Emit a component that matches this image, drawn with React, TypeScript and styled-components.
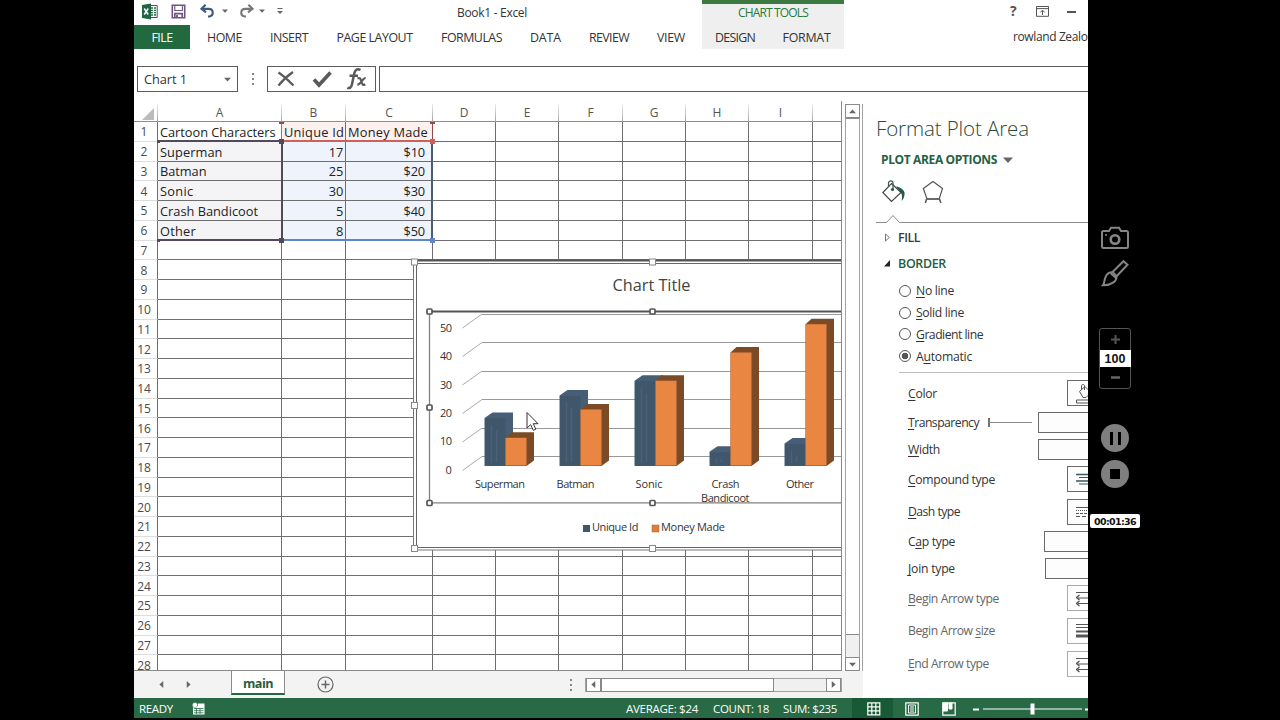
import React, { useLayoutEffect, useRef, useState } from "react";
import styled, { createGlobalStyle } from "styled-components";

const Global = createGlobalStyle`
  * { box-sizing: border-box; }
  html, body { margin: 0; background: #000; overflow: hidden; }
  body { font-family: "Open Sans", "Noto Sans", sans-serif; font-size: 12px; color: #333; }
  svg { display: block; flex: none; }
  u { text-underline-offset: 2px; text-decoration-thickness: 1px; }
`;

/* Text tracked so that it fills a known advance width. */
const FitSpan = styled.span`
  display: inline-block;
  white-space: pre;
`;

function Fit({ w, children }: { w: number; children: React.ReactNode }) {
  const ref = useRef<HTMLSpanElement>(null);
  const [spacing, setSpacing] = useState(0);
  useLayoutEffect(() => {
    const el = ref.current;
    if (!el) return;
    const n = (el.textContent || "").length;
    setSpacing((w - el.getBoundingClientRect().width) / n);
  }, [w]);
  return (
    <FitSpan ref={ref} style={{ letterSpacing: spacing }}>
      {children}
    </FitSpan>
  );
}

const Screen = styled.div`
  display: flex;
  width: 1280px;
  height: 720px;
  padding-left: 134px;
  background: #000;
  overflow: hidden;
`;
const Window = styled.div`
  display: flex;
  flex-direction: column;
  flex: none;
  width: 954px;
  height: 718px;
  background: #fff;
  overflow: hidden;
`;

/* ---------- ribbon ---------- */
const Ribbon = styled.header`
  display: flex;
  height: 49px;
  flex: none;
`;
const RibbonMain = styled.div`
  width: 568px;
`;
const TitleRow = styled.div`
  display: flex;
  align-items: center;
  height: 25px;
  padding: 0 0 3px 7px;
`;
const Gap = styled.i<{ $w: number }>`
  flex: none;
  width: ${(p) => p.$w}px;
`;
const DocTitle = styled.div`
  padding-top: 3px;
  color: #333;
`;
const TabRow = styled.div`
  display: flex;
  height: 24px;
  font-size: 12.4px;
`;
const Tab = styled.div<{ $w: number; $file?: boolean }>`
  display: flex;
  align-items: center;
  justify-content: center;
  flex: none;
  width: ${(p) => p.$w}px;
  color: ${(p) => (p.$file ? "#fff" : "#333")};
  background: ${(p) => (p.$file ? "#23693f" : "transparent")};
`;
const Context = styled.div`
  width: 142px;
  border-top: 4px solid #3c7a42;
  background: #efefef;
`;
const ContextTitle = styled.div`
  display: flex;
  align-items: center;
  justify-content: center;
  height: 21px;
  padding-bottom: 4px;
  color: #287a35;
`;
const Account = styled.div`
  width: 244px;
`;
const WindowButtons = styled.div`
  display: flex;
  align-items: center;
  height: 25px;
  padding: 0 0 3px 166px;
`;
const Help = styled.b`
  width: 10px;
  font-size: 14px;
  line-height: 14px;
  color: #555;
`;
const User = styled.div`
  display: flex;
  align-items: center;
  height: 23px;
  padding-left: 169px;
  white-space: nowrap;
`;

/* ---------- formula bar ---------- */
const FormulaBar = styled.div`
  display: flex;
  flex: none;
  height: 52px;
  padding: 17px 0 9px 3px;
`;
const NameBox = styled.div`
  display: flex;
  align-items: center;
  justify-content: space-between;
  width: 101px;
  height: 26px;
  padding: 0 6px 0 6px;
  border: 1px solid #5c5c5c;
  font-size: 12.8px;
`;
const Dots = styled.div`
  display: flex;
  flex-direction: column;
  justify-content: center;
  align-items: center;
  gap: 3px;
  width: 29px;
`;
const Dot = styled.i`
  width: 2px;
  height: 2px;
  background: #888;
`;
const FxBox = styled.div`
  display: flex;
  align-items: center;
  width: 109px;
  height: 26px;
  padding-left: 9px;
  border: 1px solid #5c5c5c;
`;
const FormulaInput = styled.div`
  flex: 1;
  height: 26px;
  margin: 0 -2px 0 3px;
  border: 1px solid #5c5c5c;
`;

/* ---------- sheet ---------- */
const Body = styled.div`
  display: flex;
  flex: none;
  height: 597px;
`;
const SheetColumn = styled.div`
  display: flex;
  flex-direction: column;
  width: 729px;
  flex: none;
`;
const SheetRow = styled.div`
  display: flex;
  height: 570px;
`;
const COLS = "124px 64px 87px 63px 63px 64px 63px 63px 64px 29px";
const Sheet = styled.div`
  position: relative;
  width: 708px;
  height: 570px;
  overflow: hidden;
  border-bottom: 1px solid #8a8a8a;
  border-right: 1px solid #8a8a8a;
`;
const HeaderLine = styled.div`
  display: grid;
  grid-template-columns: 24px ${COLS};
  height: 21px;
  border-bottom: 1px solid #8c8c8c;
`;
const HeaderCell = styled.div`
  display: flex;
  align-items: center;
  justify-content: center;
  margin-top: 3px;
  padding-bottom: 2px;
  border-right: 1px solid;
  border-image: linear-gradient(#eee, #999) 1;
  font-size: 12px;
  color: #555;
`;
const Corner = styled(HeaderCell)`
  justify-content: flex-end;
  padding: 1px 3px 0 0;
`;
const Line = styled.div`
  display: grid;
  grid-template-columns: 24px ${COLS};
  height: 19.76px;
`;
const RowNumber = styled.div`
  display: flex;
  align-items: center;
  justify-content: center;
  padding: 1px 3px 0 0;
  border-right: 1px solid #6e6e6e;
  border-bottom: 1px solid #ddd;
  font-size: 12px;
  line-height: 15px;
  color: #4a4a4a;
`;
const Cell = styled.div<{ $tint?: string; $num?: boolean; $pad?: number }>`
  display: flex;
  align-items: center;
  justify-content: ${(p) => (p.$num ? "flex-end" : "flex-start")};
  padding: 1px ${(p) => p.$pad ?? 0}px 0 2px;
  border-right: 1px solid #6e6e6e;
  border-bottom: 1px solid #6e6e6e;
  background: ${(p) => p.$tint ?? "#fff"};
  font-size: 12.8px;
  line-height: 16px;
  color: #222;
`;
const Outline = styled.i<{ $x: number; $y: number; $w: number; $h: number; $c: string }>`
  position: absolute;
  left: ${(p) => p.$x}px;
  top: ${(p) => p.$y}px;
  width: ${(p) => p.$w}px;
  height: ${(p) => p.$h}px;
  background: ${(p) => p.$c};
`;
const ChartObject = styled.div`
  position: absolute;
  left: 276px;
  top: 154px;
`;
const VScroll = styled.div`
  display: flex;
  flex-direction: column;
  width: 15px;
  height: 567px;
  margin: 3px 0 0 3px;
  border-left: 1px solid #a3a3a3;
  border-right: 1px solid #a3a3a3;
`;
const ScrollButton = styled.div`
  display: flex;
  align-items: center;
  justify-content: center;
  flex: none;
  width: 15px;
  height: 14px;
  border: 1px solid #8a8a8a;
  background: #fff;
`;
const VButton = styled(ScrollButton)`
  margin-left: -1px;
`;
const VThumb = styled.div`
  height: 517px;
  border-top: 1px solid #8a8a8a;
  border-bottom: 1px solid #8a8a8a;
`;
const VTrack = styled.div`
  flex: 1;
  background: #f0f0f0;
`;
const TabBar = styled.div`
  display: flex;
  align-items: center;
  height: 27px;
  padding-left: 24px;
  background: #f3f3f3;
`;
const SheetTab = styled.div`
  display: flex;
  align-items: center;
  justify-content: center;
  align-self: flex-start;
  width: 54px;
  height: 25px;
  margin-top: -1px;
  padding-top: 3px;
  border: solid #8a8a8a;
  border-width: 0 1px;
  border-bottom: 2px solid #23693f;
  background: #fff;
  font-weight: 700;
  font-size: 12.6px;
  color: #2a5c40;
`;
const HScroll = styled.div`
  display: flex;
  width: 257px;
  height: 14px;
  background: #f0f0f0;
  border: 1px solid #a3a3a3;
`;
const HButton = styled(ScrollButton)`
  margin-top: -1px;
`;
const HThumb = styled.div`
  width: 173px;
  margin: -1px 0;
  border: 1px solid #8a8a8a;
  background: #fff;
`;
const HTrack = styled.div`
  flex: 1;
`;

/* ---------- format pane ---------- */
const Pane = styled.aside`
  flex: 1;
  overflow: hidden;
  padding-left: 13px;
  background: #fff;
`;
const PaneTitle = styled.h1`
  margin: 0;
  padding-top: 13px;
  height: 47px;
  font-size: 20.5px;
  line-height: 28px;
  font-weight: 300;
  color: #2c4a36;
`;
const PaneMenu = styled.div`
  display: flex;
  align-items: center;
  gap: 6px;
  height: 23px;
  padding-left: 5px;
  font-weight: 700;
  font-size: 12px;
  color: #23613f;
`;
const PaneIcons = styled.div`
  display: flex;
  gap: 17px;
  height: 42px;
  padding: 9px 0 0 6px;
`;
const Section = styled.div<{ $open?: boolean }>`
  display: flex;
  align-items: center;
  gap: ${(p) => (p.$open ? 8 : 8)}px;
  height: 26px;
  padding-left: ${(p) => (p.$open ? 8 : 9)}px;
  font-weight: 600;
  font-size: 12.4px;
  color: ${(p) => (p.$open ? "#235c3c" : "#3a3a3a")};
`;
const Radios = styled.div`
  margin: 4px 0 5px 23px;
  padding-bottom: 5px;
  border-bottom: 1px solid #bdbdbd;
`;
const RadioRow = styled.div`
  display: flex;
  align-items: center;
  gap: 5px;
  height: 21.8px;
  font-size: 12.2px;
`;
const RadioRing = styled.i<{ $on?: boolean }>`
  width: 12px;
  height: 12px;
  border: 1px solid #555;
  border-radius: 50%;
  background: ${(p) => (p.$on ? "radial-gradient(circle, #555 3px, #fff 3.6px)" : "#fff")};
  background-origin: border-box;
`;
const Property = styled.div<{ $h: number; $dim?: boolean }>`
  display: flex;
  align-items: center;
  height: ${(p) => p.$h}px;
  padding-left: 32px;
  font-size: 12.2px;
  color: ${(p) => (p.$dim ? "#666" : "#333")};
`;
const LabelBox = styled.div<{ $w: number }>`
  flex: none;
  display: flex;
  width: ${(p) => p.$w}px;
`;
const Field = styled.div<{ $h: number; $dim?: boolean }>`
  display: flex;
  align-items: center;
  flex: none;
  width: 60px;
  height: ${(p) => p.$h}px;
  padding-left: 8px;
  border: 1px solid ${(p) => (p.$dim ? "#aaa" : "#6a6a6a")};
  background: #fdfdfd;
`;

/* ---------- status bar ---------- */
const Status = styled.footer`
  display: flex;
  align-items: center;
  flex: none;
  height: 20px;
  padding: 1px 0 0 5px;
  background: #286a46;
  color: #fff;
  font-size: 11.5px;
  line-height: 15px;
`;
const StatusItem = styled.div<{ $w: number }>`
  flex: none;
  display: flex;
  width: ${(p) => p.$w}px;
`;
const ViewButton = styled.div<{ $on?: boolean; $w: number }>`
  display: flex;
  align-items: center;
  justify-content: center;
  flex: none;
  width: ${(p) => p.$w}px;
  height: 20px;
  margin-top: -1px;
  padding-left: 2px;
  padding-top: 1px;
  background: ${(p) => (p.$on ? "#185a35" : "transparent")};
`;

/* ---------- recorder strip ---------- */
const Recorder = styled.div`
  display: flex;
  flex-direction: column;
  align-items: center;
  width: 54px;
  padding-top: 226px;
`;
const BrushSlot = styled.div`
  padding-top: 9px;
`;
const Stepper = styled.div`
  display: flex;
  flex-direction: column;
  align-items: center;
  width: 32px;
  height: 61px;
  margin-top: 41px;
  border: 1.5px solid #555;
  border-radius: 3px;
`;
const StepKey = styled.div`
  display: flex;
  align-items: center;
  justify-content: center;
  height: 21px;
`;
const StepValue = styled.div`
  display: flex;
  align-items: center;
  justify-content: center;
  width: 31px;
  height: 17px;
  background: #fff;
  color: #111;
  font: 700 12.5px "Liberation Sans", Arial, sans-serif;
`;
const Round = styled.div<{ $mt: number }>`
  display: flex;
  align-items: center;
  justify-content: center;
  gap: 5px;
  width: 28px;
  height: 28px;
  margin-top: ${(p) => p.$mt}px;
  border-radius: 50%;
  background: #7f7f7f;
`;
const Block = styled.i<{ $w: number; $h: number }>`
  width: ${(p) => p.$w}px;
  height: ${(p) => p.$h}px;
  background: #000;
`;
const Clock = styled.div`
  display: flex;
  align-items: center;
  justify-content: center;
  width: 50px;
  height: 14px;
  margin-top: 26px;
  border-radius: 2px;
  background: #fff;
  color: #111;
  font: 700 9.5px "DejaVu Sans", sans-serif;
`;

/* ---------- icons ---------- */
const Triangle = ({ dir = "down", s = 6, c = "#666" }: { dir?: string; s?: number; c?: string }) => {
  const rot = { down: 0, left: 90, up: 180, right: 270 }[dir] ?? 0;
  return (
    <svg width={s} height={s} viewBox="0 0 10 10">
      <path d="M0 2.5h10L5 8z" fill={c} transform={`rotate(${rot} 5 5)`} />
    </svg>
  );
};

const ExcelLogo = () => (
  <svg width="17" height="17" viewBox="0 0 17 17">
    <path d="M8 2.5h8.2v12H8z" fill="#fff" stroke="#2a6a48" />
    <path d="M10 5h2m1 0h2M10 7.3h2m1 0h2M10 9.6h2m1 0h2M10 12h2m1 0h2" stroke="#2a6a48" strokeWidth="1.3" />
    <path d="M1 2l9-1.6v16L1 15z" fill="#1f6542" />
    <path d="M3.2 5.5l4 6M7.2 5.5l-4 6" stroke="#fff" strokeWidth="1.5" />
  </svg>
);
const Save = () => (
  <svg width="15" height="15" viewBox="0 0 15 15" fill="none" stroke="#6d5480" strokeWidth="1.6">
    <path d="M1.3 1.3h12.4v12.4H1.3z" />
    <path d="M3.8 1.5v5h7.6v-5" strokeWidth="1.1" />
    <path d="M3.8 13.5V9.6h7.4v3.9" />
    <path d="M6 11v3" strokeWidth="1.8" />
  </svg>
);
const Undo = ({ flip, c }: { flip?: boolean; c: string }) => (
  <svg width="15" height="14" viewBox="0 0 15 14" fill="none" stroke={c} strokeWidth="2.1">
    <g transform={flip ? "translate(15 0) scale(-1 1)" : undefined}>
      <path d="M5.6.8L1.5 4.8l4.5 3.6" />
      <path d="M2 4.9h6.5c5.4 0 5.6 6.4 1 7.6H8" />
    </g>
  </svg>
);
const Customize = () => (
  <svg width="6" height="8" viewBox="0 0 6 8">
    <path d="M.5 1.5h5" stroke="#666" />
    <path d="M0 4h6L3 7z" fill="#666" />
  </svg>
);
const RibbonOptions = () => (
  <svg width="13" height="11" viewBox="0 0 13 11" fill="none" stroke="#555">
    <path d="M.5.5h12v9.8H.5zM.5 2.6h12M6.5 9V4.4M4.3 6.4l2.2-2.2 2.2 2.2" />
  </svg>
);
const FormulaIcons = () => (
  <svg width="92" height="24" viewBox="0 0 92 24" fill="none" stroke="#5a5a5a">
    <path d="M1.500 5.500C6 8.500 11 13 16.500 18.500M16 5C10 9 6 13 1.500 18.500" strokeWidth="2.200" />
    <path d="M37 12.500l5 5.500L53.500 5.500" strokeWidth="3.600" />
    <path d="M83.500 3c-3-1.800-5.400-.5-6.200 3.200l-2.300 11c-.7 3.400-2.600 4.600-4.600 3.400M72.500 8.800h8.500" strokeWidth="2.500" />
    <path d="M80.500 11.500c3-1.400 3 .5 4 3.500s1.500 3.600 3.800 2.200M88.700 11c-3-.6-5 7-8.400 6.500" strokeWidth="2.200" />
  </svg>
);
const BucketIcon = () => (
  <svg width="23" height="23" viewBox="0 0 23 23" fill="none">
    <path d="M9.500 3.500l9.500 9-9.500 9L.8 12.500z" stroke="#444" strokeWidth="1.200" />
    <path d="M6.500 6.500V3c0-2.800 4.500-2.800 4.500 0v6" stroke="#3d5a4c" strokeWidth="1.200" />
    <circle cx="10.500" cy="9.500" r="1.600" fill="#235c45" />
    <path d="M14 6.500c5 .5 9 4 8.600 7.500-.2 3-1.200 5-3 7 .8-4 .6-6-.6-8.300z" fill="#235c45" />
  </svg>
);
const PentagonIcon = () => (
  <svg width="22" height="24" viewBox="0 0 22 24" fill="none" stroke="#555" strokeWidth="1.200">
    <path d="M11 1.500l9.500 7-3.300 10.500H5L1.300 8.500z" />
    <path d="M5 19h12.200M4.600 19l-1.300 4M17.500 19l1.400 4" strokeWidth="1.500" />
  </svg>
);
const PaneNotch = () => (
  <svg width="212" height="11" viewBox="0 0 212 11" fill="none" stroke="#8a8a8a">
    <path d="M-1 9.500H10.500L17 2.500l6.500 7H212" />
  </svg>
);
const OpenMark = () => (
  <svg width="6" height="7" viewBox="0 0 6 7">
    <path d="M6 0v6.500H0z" fill="#222" />
  </svg>
);
const ClosedMark = () => (
  <svg width="5" height="9" viewBox="0 0 5 9" fill="none" stroke="#777">
    <path d="M.5 1v7L4.300 4.500z" />
  </svg>
);
const FieldIcon = ({ kind }: { kind: string }) => (
  <svg width="24" height="24" viewBox="0 0 24 24" fill="none" stroke="#555">
    {kind === "color" && (
      <g>
        <path d="M3.500 10.500L9 5.500l6 6-5 5h-3z" />
        <path d="M5.500 9V5c0-2 3-2 3 0v4" />
        <path d="M.5 19h20v3H.500z" />
      </g>
    )}
    {kind === "compound" && (
      <g stroke="#3d5662">
        <path d="M0 7.500h24M0 14h24" strokeWidth="1.500" />
        <path d="M3 10.500h21M3 17h21" />
      </g>
    )}
    {kind === "dash" && (
      <g>
        <path d="M0 7.500h24" />
        <path d="M0 10.500h24" strokeDasharray="1 1" />
        <path d="M0 13.500h24" strokeDasharray="3 1" />
        <path d="M0 16.500h24" strokeDasharray="4 2" />
      </g>
    )}
    {kind === "arrow" && (
      <g>
        <path d="M0 6.500h24M2 12h22M2 17.500h22" />
        <path d="M3.500 9L.5 11.500l3 2.500M3.500 15L.5 17.500l3 2.500" strokeWidth="1.400" />
      </g>
    )}
    {kind === "size" && (
      <g>
        <path d="M0 5.500h24" />
        <path d="M0 8.500h24" />
        <path d="M0 12.500h24" strokeWidth="2" />
        <path d="M0 17h24" strokeWidth="3" />
      </g>
    )}
  </svg>
);
const MacroIcon = () => (
  <svg width="13" height="13" viewBox="0 0 13 13">
    <path d="M1 4h11.500v8.500H1zM6 1.500h6.500V4H6z" fill="#fff" />
    <circle cx="3" cy="3" r="2.600" fill="#fff" stroke="#286a46" strokeWidth=".4" />
    <path d="M2 6.500h9.500M2 8.700h9.500M2 10.800h9.500M4.500 6v6M8 6v6" stroke="#286a46" strokeWidth=".8" />
  </svg>
);
const ViewIcon = ({ kind }: { kind: string }) => (
  <svg width="14" height="14" viewBox="0 0 14 14" fill="none" stroke="#fff">
    {kind === "grid" && <path d="M.8.8h12v12H.8zM4.800.8v12M8.800.8v12M.8 4.800h12M.8 8.800h12" strokeWidth="1.200" />}
    {kind === "page" && (
      <g>
        <path d="M.8.8h12.400v12.400H.8z" strokeWidth="1.200" />
        <path d="M3.500 3h7v8h-7zM5 5h4M5 7h4M5 9h4" />
      </g>
    )}
    {kind === "break" && (
      <g>
        <path d="M.8.8h12.400v12.400H.8z" strokeWidth="1.200" />
        <path d="M1 1h4.500v8H1zM7 1h3v6H7z" fill="#fff" />
      </g>
    )}
  </svg>
);
const ZoomSlider = () => (
  <svg width="116" height="12" viewBox="0 0 116 12" stroke="#fff" fill="none">
    <path d="M0 6.500h6M112 6.500h4" strokeWidth="2" />
    <path d="M10 6h99" />
    <path d="M59.500.5v11" strokeWidth="4" />
  </svg>
);
const Camera = () => (
  <svg width="30" height="24" viewBox="0 0 30 24" fill="none" stroke="#858585" strokeWidth="2">
    <path d="M3.500 5H9l2-3.200h8L21 5h5.500c1 0 1.500.6 1.500 1.500v14c0 .9-.6 1.500-1.500 1.500h-23C2.600 22 2 21.400 2 20.500v-14C2 5.600 2.600 5 3.500 5z" />
    <circle cx="15" cy="13.500" r="4.300" strokeWidth="2.600" />
    <path d="M5 9h2" strokeWidth="1.500" />
  </svg>
);
const Brush = () => (
  <svg width="28" height="28" viewBox="0 0 28 28" fill="none" stroke="#858585" strokeWidth="2">
    <path d="M11.500 13L22.500 2.200l4 3.600L15.500 17.200" />
    <path d="M11.500 13l4 4.200c.3 5-5 9.300-13.500 9 1.600-2 1-4 2.300-7.500 1.300-3.600 4-5.700 7.200-5.700z" />
    <path d="M9.500 14l5.500 5" />
  </svg>
);

/* ---------- chart ---------- */
const AXIS = [50, 40, 30, 20, 10, 0];
const BARS = [
  { name: "Superman", nx: 475, nw: 50, blue: 412.5, orange: 432.3 },
  { name: "Batman", nx: 556.5, nw: 38, blue: 390, orange: 404 },
  { name: "Sonic", nx: 635.5, nw: 27, blue: 375.2, orange: 375.2 },
  { name: "Crash", nx: 711.5, nw: 28, blue: 446.3, orange: 347 },
  { name: "Other", nx: 786, nw: 28, blue: 438, orange: 318.7 },
];

function Chart() {
  const label = { fontFamily: '"Open Sans", sans-serif', fontSize: 11, fill: "#333" };
  return (
    <svg width="431" height="300" viewBox="410 255 431 300">
      <rect x="413.500" y="260.500" width="440" height="289.500" fill="#fff" stroke="#777" />
      <path d="M413 260.500H841" stroke="#555" strokeWidth="2" />
      <path d="M841 263.500H416.500V547.500H841" fill="none" stroke="#666" />
      <text
        x="612.500"
        y="290.500"
        textLength="78"
        lengthAdjust="spacingAndGlyphs"
        fontFamily='"Open Sans", sans-serif'
        fontSize="16"
        fill="#444"
      >
        Chart Title
      </text>
      {AXIS.map((v, i) => {
        const y = 314 + i * 28.5;
        return (
          <g key={v}>
            <path d={`M462.500 ${y + 14}L482 ${y}`} stroke="#aaa" fill="none" />
            <path d={`M482 ${Math.floor(y) + 0.5}H841`} stroke="#999" />
            <text x={v ? 440 : 445.500} y={332 + i * 28.3} textLength={v ? 12 : 6} {...label}>
              {v}
            </text>
          </g>
        );
      })}
      {BARS.map((b, i) => {
        const x = 484.500 + i * 75;
        return (
          <g key={b.name}>
            <path d={`M${x} 466V${b.blue + 5.500}l8-5.500h20.500V461l-7 5z`} fill="#465f77" />
            <path d={`M${x + 0.500} ${b.blue + 6}h20.500V465.500h-20.500z`} fill="#3f566b" />
            <path
              d={`M${x + 7} ${Math.min(b.blue + 13, 458)}V463M${x + 12} ${Math.min(b.blue + 18, 459)}V462`}
              stroke="#4a6279"
              strokeWidth="1.500"
            />
            <path d={`M${x + 21} ${b.orange + 5.500}l6-5.500h22.500V460.500l-7.500 5.500h-21z`} fill="#7b4a26" />
            <rect x={x + 21} y={b.orange + 5.500} width="21" height={465.500 - b.orange - 5.500} fill="#e88642" />
            <text x={b.nx} y="488" textLength={b.nw} {...label}>
              {b.name}
            </text>
          </g>
        );
      })}
      <text x="701" y="502" textLength="48.500" {...label}>
        Bandicoot
      </text>
      <path d="M841 311.500H429.500" stroke="#555" strokeWidth="1.800" />
      <path d="M429.500 311V503M429 502.800H841" stroke="#808080" strokeWidth="1.300" fill="none" />
      <rect x="583" y="525" width="7" height="7" fill="#3f566b" />
      <text x="592" y="531" textLength="46.500" {...label}>
        Unique Id
      </text>
      <rect x="652" y="525" width="7" height="7" fill="#e07c3c" stroke="#a8602f" strokeWidth=".5" />
      <text x="661" y="531" textLength="64" {...label}>
        Money Made
      </text>
      {[[414.5, 262], [652.5, 262], [414.5, 405.5], [414.5, 548.5], [652.5, 548.5]].map(([x, y]) => (
        <rect key={`${x}${y}`} x={x - 3} y={y - 3} width="6" height="6" fill="#fff" stroke="#888" />
      ))}
      {[[429.5, 311.5], [652.5, 311.5], [429.5, 407.5], [429.5, 503], [652.5, 503]].map(([x, y]) => (
        <rect key={`p${x}${y}`} x={x - 2.5} y={y - 2.5} width="5" height="5" rx="1" fill="#fff" stroke="#555" strokeWidth="1.700" />
      ))}
      <path d="M527 412.500v15.500l3.700-3.300 2.600 5.600 2.500-1.100-2.500-5.500h4.700z" fill="#fff" stroke="#333" />
    </svg>
  );
}

/* ---------- data ---------- */
const TABS: [string, number, number][] = [
  ["HOME", 35, 69],
  ["INSERT", 38, 60],
  ["PAGE LAYOUT", 76, 111],
  ["FORMULAS", 61, 83],
  ["DATA", 31, 65],
  ["REVIEW", 40, 62],
  ["VIEW", 28, 62],
];
const DATA: [string, number, string, string][] = [
  ["Superman", 62.5, "17", "$10"],
  ["Batman", 46.5, "25", "$20"],
  ["Sonic", 33.5, "30", "$30"],
  ["Crash Bandicoot", 98, "5", "$40"],
  ["Other", 36, "8", "$50"],
];
const GREY = "#f4f4f6";
const BLUE = "#eff3fc";
const PINK = "#fdf1ef";

function GridLine({ n }: { n: number }) {
  const d = DATA[n - 2];
  return (
    <Line>
      <RowNumber>{n}</RowNumber>
      {n === 1 ? (
        <>
          <Cell><Fit w={115.5}>Cartoon Characters</Fit></Cell>
          <Cell $tint={PINK}><Fit w={60}>Unique Id</Fit></Cell>
          <Cell $tint={PINK}><Fit w={80}>Money Made</Fit></Cell>
        </>
      ) : d ? (
        <>
          <Cell $tint={GREY}><Fit w={d[1]}>{d[0]}</Fit></Cell>
          <Cell $tint={BLUE} $num $pad={2}><Fit w={d[2].length * 7.1}>{d[2]}</Fit></Cell>
          <Cell $tint={BLUE} $num $pad={7}><Fit w={21.5}>{d[3]}</Fit></Cell>
        </>
      ) : (
        <>
          <Cell />
          <Cell />
          <Cell />
        </>
      )}
      {[0, 1, 2, 3, 4, 5, 6].map((i) => (
        <Cell key={i} />
      ))}
    </Line>
  );
}

const PURPLE = "#54485f";
const RED = "#d0605c";
const AZURE = "#5f86c8";
const SLATE = "#4d5a74";

function RangeOutlines() {
  return (
    <>
      <Outline $x={24} $y={39} $w={123} $h={2} $c={PURPLE} />
      <Outline $x={24} $y={138} $w={123} $h={2} $c={PURPLE} />
      <Outline $x={147} $y={41} $w={2} $h={99} $c={PURPLE} />
      <Outline $x={147} $y={39} $w={151} $h={2} $c={RED} />
      <Outline $x={147} $y={21} $w={1} $h={18} $c={RED} />
      <Outline $x={298} $y={21} $w={1} $h={18} $c="#8f4a4c" />
      <Outline $x={149} $y={138} $w={149} $h={2} $c={AZURE} />
      <Outline $x={297} $y={41} $w={2} $h={98} $c={SLATE} />
      <Outline $x={145} $y={38} $w={5} $h={5} $c={PURPLE} />
      <Outline $x={145} $y={137} $w={5} $h={5} $c={PURPLE} />
      <Outline $x={23} $y={39} $w={3} $h={3} $c={PURPLE} />
      <Outline $x={23} $y={138} $w={3} $h={3} $c={PURPLE} />
      <Outline $x={145} $y={21} $w={5} $h={2} $c="#8f4a4c" />
      <Outline $x={296} $y={21} $w={5} $h={2} $c="#8f4a4c" />
      <Outline $x={296} $y={38} $w={5} $h={5} $c={RED} />
      <Outline $x={296} $y={137} $w={5} $h={5} $c={AZURE} />
    </>
  );
}

export default function App() {
  return (
    <Screen>
      <Global />
      <Window>
        <Ribbon>
          <RibbonMain>
            <TitleRow>
              <ExcelLogo />
              <Gap $w={13} />
              <Save />
              <Gap $w={14} />
              <Undo c="#3b5a80" />
              <Gap $w={7} />
              <Triangle s={6} />
              <Gap $w={11} />
              <Undo flip c="#777" />
              <Gap $w={5} />
              <Triangle s={6} />
              <Gap $w={12} />
              <Customize />
              <Gap $w={174} />
              <DocTitle><Fit w={70}>Book1 - Excel</Fit></DocTitle>
            </TitleRow>
            <TabRow>
              <Tab $w={56} $file><Fit w={21}>FILE</Fit></Tab>
              {TABS.map(([t, w, cell]) => (
                <Tab key={t} $w={cell}><Fit w={w}>{t}</Fit></Tab>
              ))}
            </TabRow>
          </RibbonMain>
          <Context>
            <ContextTitle><Fit w={70}>CHART TOOLS</Fit></ContextTitle>
            <TabRow>
              <Tab $w={66}><Fit w={40}>DESIGN</Fit></Tab>
              <Tab $w={77}><Fit w={48}>FORMAT</Fit></Tab>
            </TabRow>
          </Context>
          <Account>
            <WindowButtons>
              <Help>?</Help>
              <Gap $w={16} />
              <RibbonOptions />
              <Gap $w={18} />
              <svg width="9" height="4" viewBox="0 0 9 4"><path d="M0 3h9" stroke="#555" strokeWidth="2" /></svg>
            </WindowButtons>
            <User><Fit w={74.5}>rowland Zealo</Fit></User>
          </Account>
        </Ribbon>

        <FormulaBar>
          <NameBox>
            <Fit w={43}>Chart 1</Fit>
            <Triangle s={7} />
          </NameBox>
          <Dots><Dot /><Dot /><Dot /></Dots>
          <FxBox><FormulaIcons /></FxBox>
          <FormulaInput />
        </FormulaBar>

        <Body>
          <SheetColumn>
            <SheetRow>
              <Sheet>
                <HeaderLine>
                  <Corner>
                    <svg width="12" height="12" viewBox="0 0 12 12"><path d="M12 0v12H0z" fill="#bbb" /></svg>
                  </Corner>
                  {["A", "B", "C", "D", "E", "F", "G", "H", "I", ""].map((c) => (
                    <HeaderCell key={c}>{c}</HeaderCell>
                  ))}
                </HeaderLine>
                {Array.from({ length: 28 }, (_, i) => (
                  <GridLine key={i} n={i + 1} />
                ))}
                <RangeOutlines />
                <ChartObject><Chart /></ChartObject>
              </Sheet>
              <VScroll>
                <VButton><Triangle dir="up" s={7} /></VButton>
                <VThumb />
                <VTrack />
                <VButton><Triangle dir="down" s={7} /></VButton>
              </VScroll>
              <svg width="3" height="597" viewBox="0 0 3 597"><path d="M2.500 3V597" stroke="#a3a3a3" /></svg>
            </SheetRow>
            <TabBar>
              <Triangle dir="left" s={7} />
              <Gap $w={20} />
              <Triangle dir="right" s={7} />
              <Gap $w={39} />
              <SheetTab><Fit w={30}>main</Fit></SheetTab>
              <Gap $w={32} />
              <svg width="17" height="17" viewBox="0 0 17 17" fill="none" stroke="#666">
                <circle cx="8.500" cy="8.500" r="7.500" strokeWidth="1.200" />
                <path d="M4.500 8.500h8M8.500 4.500v8" strokeWidth="1.500" />
              </svg>
              <Gap $w={222} />
              <Dots><Dot /><Dot /><Dot /></Dots>
              <HScroll>
                <HButton><Triangle dir="left" s={7} /></HButton>
                <HThumb />
                <HTrack />
                <HButton><Triangle dir="right" s={7} /></HButton>
              </HScroll>
            </TabBar>
          </SheetColumn>

          <Pane>
            <PaneTitle><Fit w={153}>Format Plot Area</Fit></PaneTitle>
            <PaneMenu>
              <Fit w={116}>PLOT AREA OPTIONS</Fit>
              <Triangle s={10} />
            </PaneMenu>
            <PaneIcons><BucketIcon /><PentagonIcon /></PaneIcons>
            <PaneNotch />
            <Section><ClosedMark /><Fit w={22}>FILL</Fit></Section>
            <Section $open><OpenMark /><Fit w={48}>BORDER</Fit></Section>
            <Radios>
              <RadioRow><RadioRing /><Fit w={38}><u>N</u>o line</Fit></RadioRow>
              <RadioRow><RadioRing /><Fit w={48}><u>S</u>olid line</Fit></RadioRow>
              <RadioRow><RadioRing /><Fit w={67}><u>G</u>radient line</Fit></RadioRow>
              <RadioRow><RadioRing $on /><Fit w={56}>A<u>u</u>tomatic</Fit></RadioRow>
            </Radios>
            <Property $h={30}><LabelBox $w={159}><Fit w={29}><u>C</u>olor</Fit></LabelBox><Field $h={26}><FieldIcon kind="color" /></Field></Property>
            <Property $h={29}>
              <LabelBox $w={80}><Fit w={71}><u>T</u>ransparency</Fit></LabelBox>
              <svg width="50" height="11" viewBox="0 0 50 11"><path d="M1 1v9" stroke="#444" strokeWidth="1.500" /><path d="M1 5.500h43" stroke="#888" /></svg>
              <Field $h={21} />
            </Property>
            <Property $h={25}><LabelBox $w={130}><Fit w={32}><u>W</u>idth</Fit></LabelBox><Field $h={21} /></Property>
            <Property $h={34}><LabelBox $w={159}><Fit w={87}><u>C</u>ompound type</Fit></LabelBox><Field $h={26}><FieldIcon kind="compound" /></Field></Property>
            <Property $h={31}><LabelBox $w={159}><Fit w={52}><u>D</u>ash type</Fit></LabelBox><Field $h={26}><FieldIcon kind="dash" /></Field></Property>
            <Property $h={29}><LabelBox $w={136}><Fit w={47}>C<u>a</u>p type</Fit></LabelBox><Field $h={21} /></Property>
            <Property $h={25}><LabelBox $w={137}><Fit w={47}><u>J</u>oin type</Fit></LabelBox><Field $h={21} /></Property>
            <Property $h={34} $dim><LabelBox $w={159}><Fit w={91}><u>B</u>egin Arrow type</Fit></LabelBox><Field $h={26} $dim><FieldIcon kind="arrow" /></Field></Property>
            <Property $h={31} $dim><LabelBox $w={159}><Fit w={87}>Begin Arrow <u>s</u>ize</Fit></LabelBox><Field $h={26} $dim><FieldIcon kind="size" /></Field></Property>
            <Property $h={35} $dim><LabelBox $w={159}><Fit w={81}><u>E</u>nd Arrow type</Fit></LabelBox><Field $h={26} $dim><FieldIcon kind="arrow" /></Field></Property>
          </Pane>
        </Body>

        <Status>
          <StatusItem $w={53}><Fit w={34}>READY</Fit></StatusItem>
          <StatusItem $w={434}><MacroIcon /></StatusItem>
          <StatusItem $w={87}><Fit w={72}>AVERAGE: $24</Fit></StatusItem>
          <StatusItem $w={70}><Fit w={56}>COUNT: 18</Fit></StatusItem>
          <StatusItem $w={69}><Fit w={54}>SUM: $235</Fit></StatusItem>
          <ViewButton $w={41} $on><ViewIcon kind="grid" /></ViewButton>
          <ViewButton $w={36}><ViewIcon kind="page" /></ViewButton>
          <ViewButton $w={38}><ViewIcon kind="break" /></ViewButton>
          <Gap $w={6} />
          <ZoomSlider />
        </Status>
      </Window>

      <Recorder>
        <Camera />
        <BrushSlot><Brush /></BrushSlot>
        <Stepper>
          <StepKey>
            <svg width="9" height="9" viewBox="0 0 9 9"><path d="M0 4.500h9M4.500 0v9" stroke="#555" strokeWidth="2" /></svg>
          </StepKey>
          <StepValue>100</StepValue>
          <StepKey>
            <svg width="9" height="3" viewBox="0 0 9 3"><path d="M0 1.500h9" stroke="#666" strokeWidth="2.500" /></svg>
          </StepKey>
        </Stepper>
        <Round $mt={35}><Block $w={3} $h={13} /><Block $w={3} $h={13} /></Round>
        <Round $mt={8}><Block $w={10} $h={10} /></Round>
        <Clock><Fit w={42}>00:01:36</Fit></Clock>
      </Recorder>
    </Screen>
  );
}
